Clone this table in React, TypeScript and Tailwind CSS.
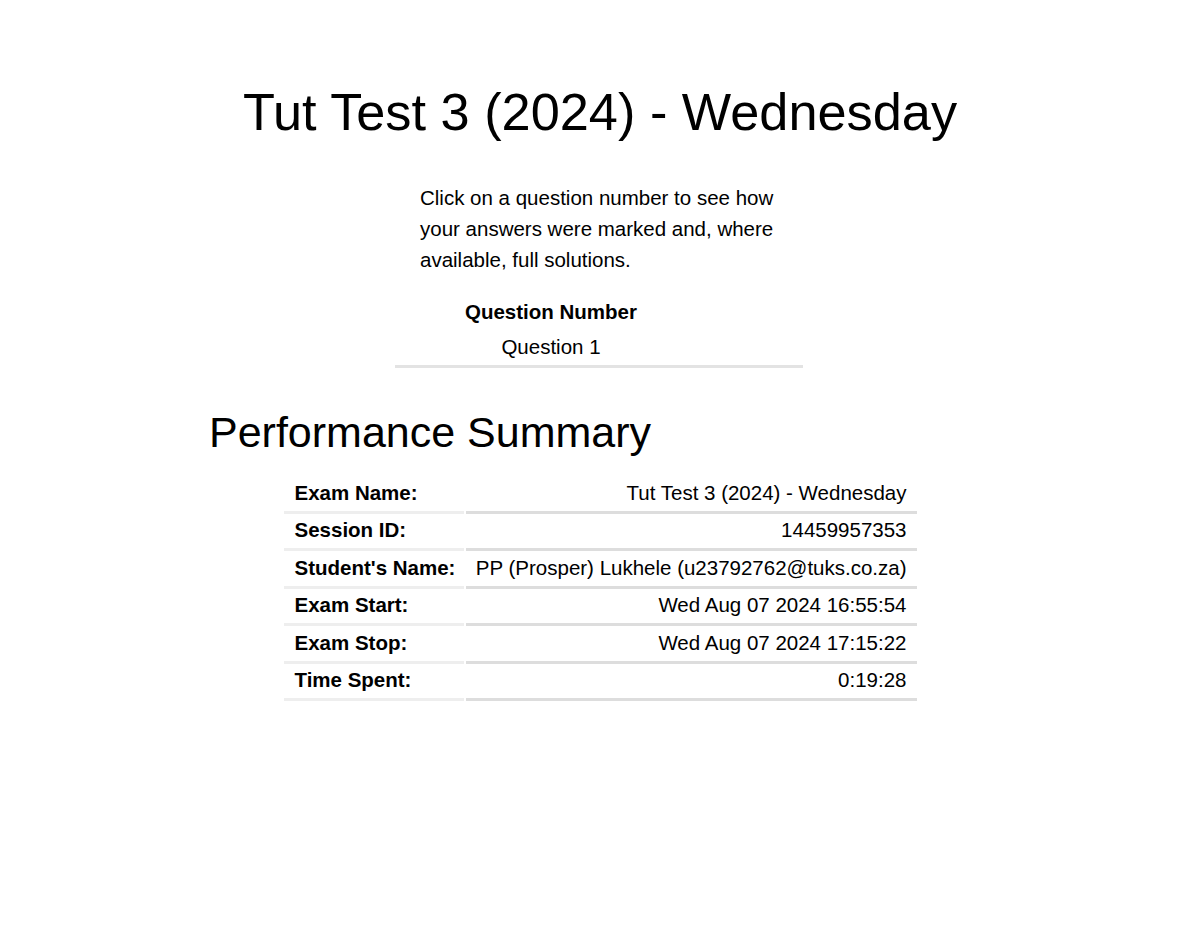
import React from "react";

const rows = [
  { label: "Exam Name:", value: "Tut Test 3 (2024) - Wednesday" },
  { label: "Session ID:", value: "14459957353" },
  { label: "Student's Name:", value: "PP (Prosper) Lukhele (u23792762@tuks.co.za)" },
  { label: "Exam Start:", value: "Wed Aug 07 2024 16:55:54" },
  { label: "Exam Stop:", value: "Wed Aug 07 2024 17:15:22" },
  { label: "Time Spent:", value: "0:19:28" },
];

const App = () => {
  return (
    <div className="min-h-screen bg-white text-black font-['Liberation_Sans',Arial,sans-serif]">
      <div className="w-[782px] mx-auto pt-[82px]">
        <h1 className="text-[52.3px] leading-[60px] text-center font-normal">
          Tut Test 3 (2024) - Wednesday
        </h1>

        {/* intro */}
        <p className="w-[360px] mx-auto mt-[40px] pr-[2px] text-[20.5px] leading-[31px]">
          Click on a question number to see how your answers were marked and, where available, full solutions.
        </p>

        {/* question list */}
        <div className="w-[408px] mx-auto -translate-x-[1px] mt-[20px] text-[20.5px]">
          <div className="flex h-[35px] items-center">
            <div className="w-[312px] text-center font-bold">Question Number</div>
            <div className="flex-1" />
          </div>
          <div className="flex h-[38px] items-center border-b-[3px] border-[#e3e3e3]">
            <div className="w-[312px] text-center">Question 1</div>
            <div className="flex-1" />
          </div>
        </div>

        <h2 className="mt-[39px] text-[43px] leading-[50px] font-normal">Performance Summary</h2>

        {/* summary table */}
        <table className="mx-auto mt-[19px] w-[637px] border-separate border-spacing-x-[2px] border-spacing-y-0 text-[20.5px]">
          <tbody>
            {rows.map((r) => (
              <tr key={r.label}>
                <td className="w-[180px] h-[37.5px] pl-[11px] whitespace-nowrap font-bold border-b-[3px] border-[#eeeeee] align-middle">
                  {r.label}
                </td>
                <td className="h-[37.5px] pr-[10px] text-right whitespace-nowrap border-b-[3px] border-[#dddddd] align-middle">
                  {r.value}
                </td>
              </tr>
            ))}
          </tbody>
        </table>
      </div>
    </div>
  );
};

export default App;
